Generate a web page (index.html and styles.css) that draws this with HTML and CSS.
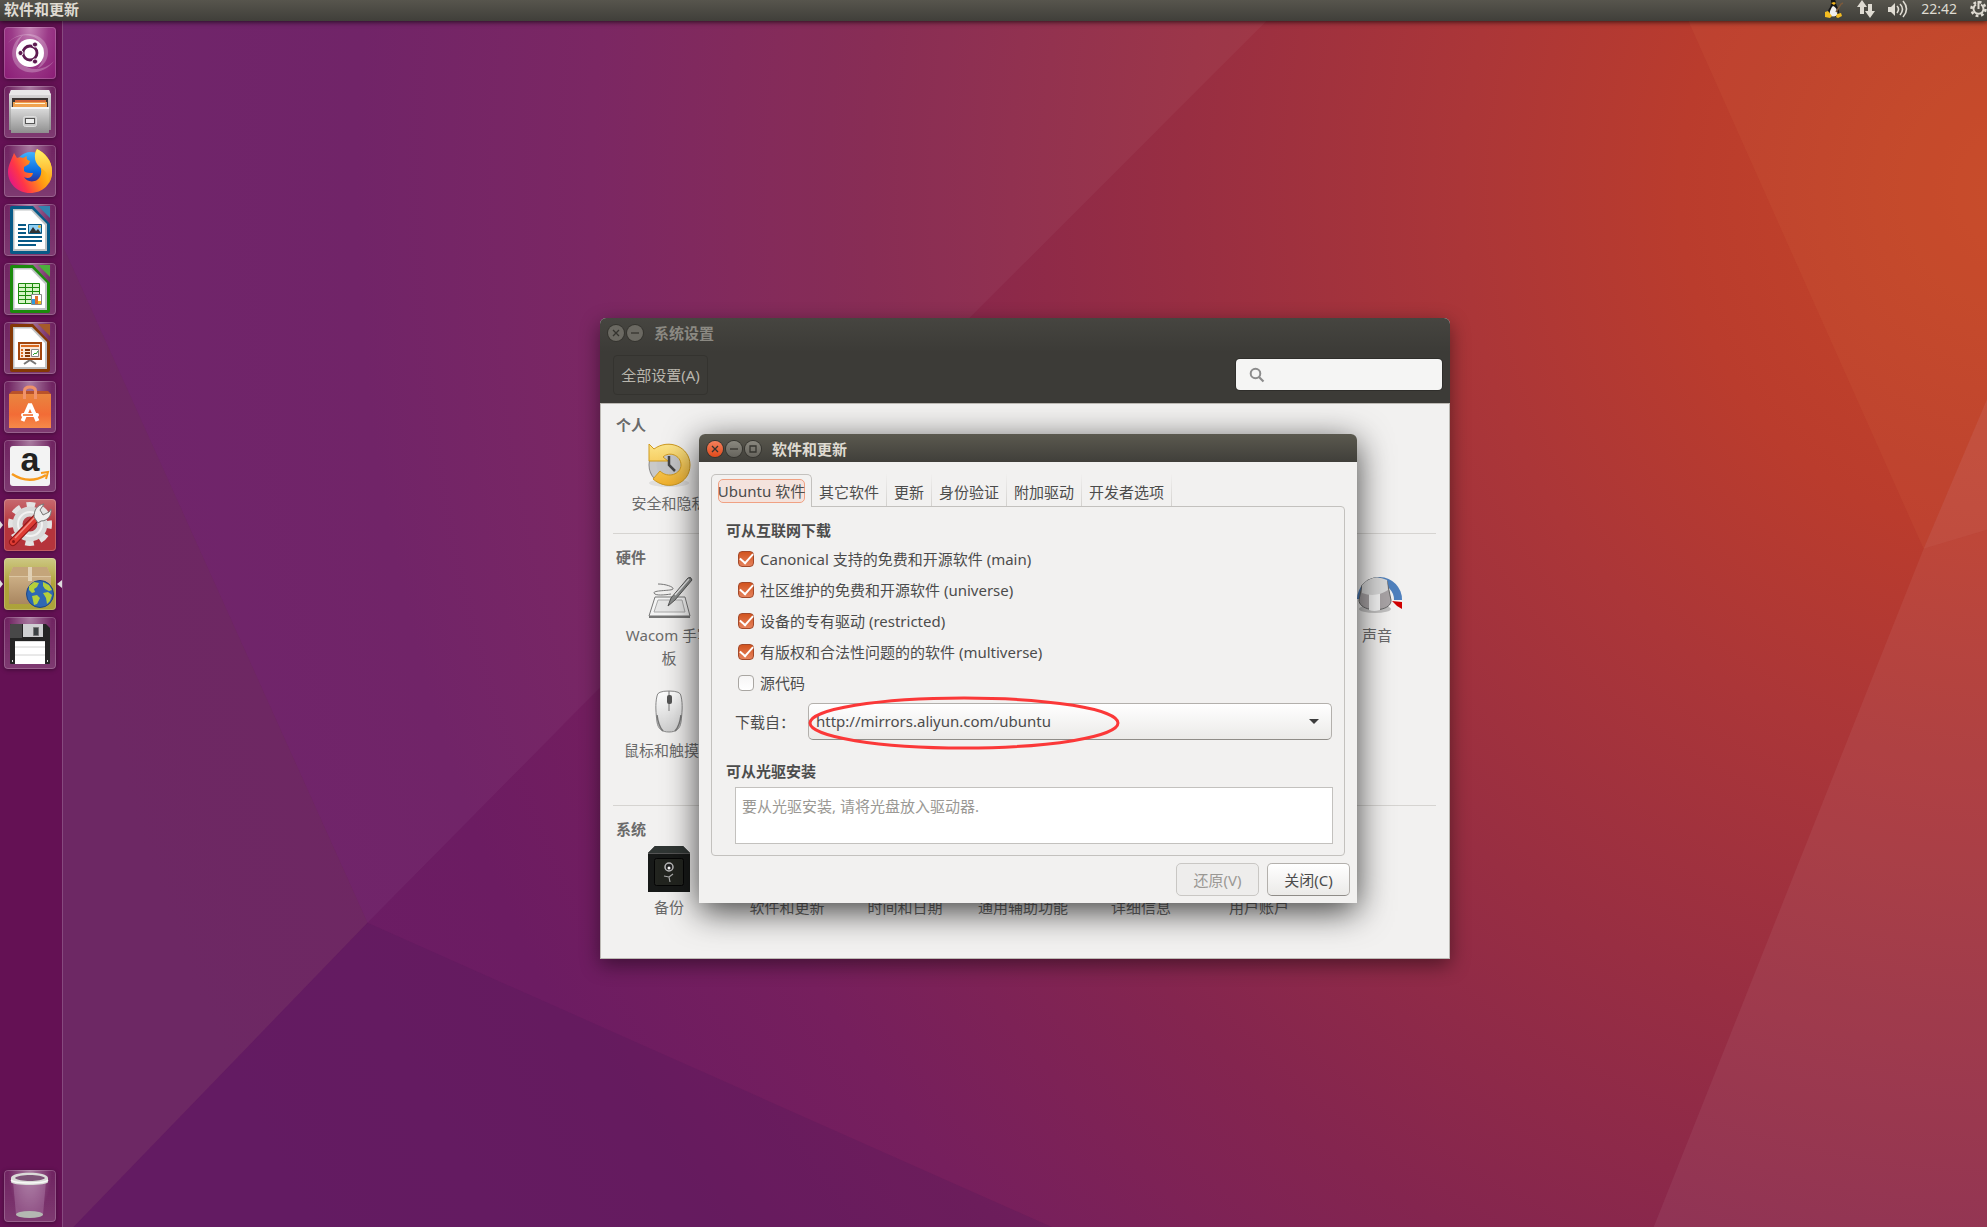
FILE: index.html
```html
<!DOCTYPE html>
<html lang="zh-CN">
<head>
    <meta charset="UTF-8">
    <meta name="viewport" content="width=device-width, initial-scale=1.0">
    <title>软件和更新</title>
    <link rel="stylesheet" href="styles.css">
</head>
<body>
    <svg class="wallpaper" viewBox="0 0 1568 968" preserveAspectRatio="none" aria-hidden="true">
        <defs>
            <radialGradient id="wall" gradientUnits="userSpaceOnUse" cx="0" cy="0" r="1" gradientTransform="translate(1590 150) scale(1560 1620)">
                <stop offset="0" stop-color="#c64826"/>
                <stop offset="0.17" stop-color="#ba3c2d"/>
                <stop offset="0.28" stop-color="#ab3638"/>
                <stop offset="0.42" stop-color="#982e42"/>
                <stop offset="0.58" stop-color="#84254f"/>
                <stop offset="0.72" stop-color="#761f5d"/>
                <stop offset="0.84" stop-color="#6c1c62"/>
                <stop offset="1" stop-color="#6a1d66"/>
            </radialGradient>
        </defs>
        <rect width="1568" height="968" fill="url(#wall)"/>
        <path d="M0 0H1016L460 556L290 728L50 195L0 80z" fill="#fff" fill-opacity="0.04"/>
        <path d="M50 195L290 728L58 968H0V80z" fill="#806060" fill-opacity="0.18"/>
        <path d="M290 728L58 968H830z" fill="#501858" fill-opacity="0.25"/>
        <path d="M1325 0L1518 433L1568 315V0z" fill="#e08050" fill-opacity="0.1"/>
        <path d="M1518 433L1568 315V418z" fill="#fff" fill-opacity="0.09"/>
        <path d="M1518 433L1568 418V968H1305z" fill="#fff" fill-opacity="0.06"/>
    </svg>

    <header class="topbar">
        <span class="app-name">软件和更新</span>
        <div class="indicators">
            <svg width="20" height="20" viewBox="0 0 20 20">
                <path d="M7 1C9-1 12 0 12 4c0 3 3 5 3 9 0 3-2 5-6 5s-6-2-5-6c1-3 3-4 3-8z" fill="#161616"/>
                <path d="M9 7c3 1 5 5 4 9-2 2-6 2-7 0-1-3 1-7 3-9z" fill="#eee"/>
                <path d="M7 4l3-1 2 1-2 2z" fill="#f2b51d"/>
                <path d="M1 13l3-1 4 5-2 2-5-1zM13 15l4-1 1 3-4 2-2-1z" fill="#f5bd20"/>
                <path d="M12 13L17 5l2-1" stroke="#7b5a3c" stroke-width="1.5" fill="none"/>
            </svg>
            <svg width="18" height="20" viewBox="0 0 18 20">
                <path d="M0 8L5 1l5 7H7v7H3V8zM8 12h3V5h4v7h3l-5 7z" fill="#dfdbd2"/>
            </svg>
            <svg width="20" height="20" viewBox="0 0 20 20">
                <path d="M0 8h3l4-4v13l-4-4H0z" fill="#dfdbd2"/>
                <path d="M9 7q3 3 0 7M12 5q5 5 0 11M15 2q7 8 0 16" stroke="#dfdbd2" stroke-width="1.6" fill="none"/>
            </svg>
            <time>22:42</time>
            <svg width="17" height="20" viewBox="0 0 17 20">
                <circle cx="8.500" cy="10" r="7" fill="none" stroke="#dfdbd2" stroke-width="2.500" stroke-dasharray="2.800 2.700"/>
                <path d="M6 5.500a5 5 0 1 0 5 0" fill="none" stroke="#dfdbd2" stroke-width="2"/>
                <path d="M8.500 2v8" stroke="#dfdbd2" stroke-width="2"/>
            </svg>
        </div>
    </header>

    <div class="workspace">
        <nav class="launcher" aria-label="启动器">
            <button class="tile tile-dash" aria-label="搜索">
                <svg viewBox="0 0 52 52">
                    <path d="M2 18C12 4 32 4 40 14c7 9 5 22-7 28 8-8 9-22 0-30C24 5 10 8 2 18z" fill="#fff" fill-opacity="0.25"/>
                    <path d="M50 34C40 48 20 49 12 38 5 29 8 14 19 8 11 17 10 29 18 37c9 8 23 6 32-3z" fill="#fff" fill-opacity="0.25"/>
                    <circle cx="26" cy="26" r="14" fill="#fff"/>
                    <circle cx="26" cy="26" r="7" fill="none" stroke="#5d1a50" stroke-width="2.800"/>
                    <g fill="#5d1a50" stroke="#fff" stroke-width="1">
                        <circle cx="16.500" cy="26" r="2.600"/>
                        <circle cx="31" cy="17.500" r="2.600"/>
                        <circle cx="31" cy="34.500" r="2.600"/>
                    </g>
                </svg>
            </button>
            <button class="tile" aria-label="文件">
                <svg viewBox="0 0 52 52">
                    <defs>
                        <linearGradient id="steel" x2="0" y2="1"><stop stop-color="#dedede"/><stop offset="1" stop-color="#8f8f8f"/></linearGradient>
                    </defs>
                    <path d="M7 4h38l2 5v35H5V9z" fill="url(#steel)"/>
                    <path d="M7 4h38l2 5H5z" fill="#e8e8e8"/>
                    <path d="M8 12h36v12H8z" fill="#3b3634"/>
                    <path d="M11 14h31v4H11z" fill="#d4683a"/>
                    <path d="M9 16h34v6H9z" fill="#f0a24e"/>
                    <path d="M11 17h30v1H11z" fill="#fff3d8"/>
                    <path d="M7 21h38v26H7z" fill="url(#steel)"/>
                    <path d="M7 21h38v2H7z" fill="#f5f5f5"/>
                    <rect x="19.500" y="30.500" width="13" height="10" rx="2" fill="#c9c9c9" stroke="#dedede"/>
                    <rect x="21.500" y="32.500" width="9" height="5" fill="#eee" stroke="#555"/>
                </svg>
            </button>
            <button class="tile" aria-label="Firefox">
                <svg viewBox="0 0 52 52">
                    <defs>
                        <linearGradient id="fox" x1="0" y1="0.700" x2="1" y2="0.200"><stop stop-color="#e31587"/><stop offset="0.250" stop-color="#ff3647"/><stop offset="0.600" stop-color="#ff9a12"/><stop offset="1" stop-color="#ffe226"/></linearGradient>
                        <linearGradient id="globe" x2="0" y2="1"><stop stop-color="#3fb4ff"/><stop offset="0.600" stop-color="#0a6be0"/><stop offset="1" stop-color="#3a1f87"/></linearGradient>
                        <linearGradient id="tail" x2="0" y2="1"><stop stop-color="#fff36a"/><stop offset="1" stop-color="#ff9e13"/></linearGradient>
                    </defs>
                    <circle cx="27" cy="23" r="16" fill="url(#globe)"/>
                    <path d="M10 8l3 5c2-1 4-1 6 0l4-2c-1 3 0 4 3 5l-1 3-5 3 0 4c2 2 5 2 9 2-1 5-5 6-9 4 2 4 8 6 13 3 6-4 5-13 1-17-4-4-4-10-1-14 8 4 15 11 15 22 0 13-9 22-22 22S4 38 4 27c0-7 4-13 6-19z" fill="url(#fox)"/>
                    <path d="M33 4c8 4 15 12 15 23 0 4-1 8-3 11 1-7-3-12-8-15-6-4-8-12-4-19z" fill="url(#tail)"/>
                </svg>
            </button>
            <button class="tile" aria-label="LibreOffice Writer">
                <svg viewBox="0 0 52 52">
                    <path d="M8 2h21l17 18v28q0 2-2 2H8q-2 0-2-2V4q0-2 2-2z" fill="#075986"/>
                    <path d="M34 2h12v12z" fill="#3382ae"/>
                    <path d="M9 5h19l15 15v27H9z" fill="#bfc3c5"/><path d="M10.500 6.500H27L41 21v24H10.500z" fill="#fff"/>
                    <path d="M14 21h8M14 25h8M14 29h8M14 33h24M14 37h24M14 41h18" stroke="#075986" stroke-width="2"/>
                    <path d="M24.500 20.500h13v9h-13z" fill="#8fd0f5" stroke="#075986"/>
                    <path d="M25 29l4-6 3 4 2-2 3 4z" fill="#333"/><circle cx="35.500" cy="22.500" r="1.500" fill="#e4b53a"/>
                </svg>
            </button>
            <button class="tile" aria-label="LibreOffice Calc">
                <svg viewBox="0 0 52 52">
                    <path d="M8 2h21l17 18v28q0 2-2 2H8q-2 0-2-2V4q0-2 2-2z" fill="#1b8a0c"/>
                    <path d="M34 2h12v12z" fill="#4cae3c"/>
                    <path d="M9 5h19l15 15v27H9z" fill="#bfc3c5"/><path d="M10.500 6.500H27L41 21v24H10.500z" fill="#fff"/>
                    <path d="M14.500 20.500h21v20h-21z" fill="#d6f5c6"/>
                    <path d="M14.500 20.500h21v20h-21zM14 24.500h22M14 28.500h22M14 32.500h22M14 36.500h22M21.500 20v21M28.500 20v21" fill="none" stroke="#1b8a0c"/>
                    <path d="M27.500 31.500h10v10h-10z" fill="#fff" stroke="#888"/>
                    <path d="M28 36h3v5h-3z" fill="#2f9be0"/><path d="M31 33h3v8h-3z" fill="#e0702a"/><path d="M34 38h3v3h-3z" fill="#f0c020"/>
                </svg>
            </button>
            <button class="tile" aria-label="LibreOffice Impress">
                <svg viewBox="0 0 52 52">
                    <path d="M8 2h21l17 18v28q0 2-2 2H8q-2 0-2-2V4q0-2 2-2z" fill="#843806"/>
                    <path d="M34 2h12v12z" fill="#a55a2a"/>
                    <path d="M9 5h19l15 15v27H9z" fill="#bfc3c5"/><path d="M10.500 6.500H27L41 21v24H10.500z" fill="#fff"/>
                    <path d="M20 42l6-4 6 4" fill="none" stroke="#777" stroke-width="2"/>
                    <path d="M15 21h22v16H15z" fill="#fbe6d6" stroke="#a2460e" stroke-width="2"/>
                    <path d="M17 24h18" stroke="#d9691e" stroke-width="2"/>
                    <path d="M17 28h2M17 31h2M17 34h2" stroke="#d9691e" stroke-width="2"/>
                    <path d="M21 28h5M21 31h5M21 34h5" stroke="#843806" stroke-width="2"/>
                    <path d="M27.500 27.500h7v7h-7z" fill="#fff" stroke="#888"/><path d="M29 33l2-2 1 1 2-3" fill="none" stroke="#2ca02c"/>
                </svg>
            </button>
            <button class="tile" aria-label="Ubuntu 软件">
                <svg viewBox="0 0 52 52">
                    <defs><linearGradient id="bag" x2="0" y2="1"><stop stop-color="#e9853f"/><stop offset="0.600" stop-color="#f26c36"/><stop offset="1" stop-color="#f58a4a"/></linearGradient></defs>
                    <path d="M5 13l3-3h36l3 3z" fill="#b9522a"/>
                    <path d="M5 13h42v34H5z" fill="url(#bag)"/>
                    <path d="M20.500 18V10q0-4 5.500-4t5.500 4v8" fill="none" stroke="#f0936b" stroke-width="3"/>
                    <path d="M18.500 40l7.500-17 7.500 17" fill="none" stroke="#fff" stroke-width="4" stroke-linejoin="bevel"/>
                    <rect x="17" y="32" width="18" height="4" rx="2" fill="#fff"/><path d="M19 34h10" stroke="#f0641e" stroke-width="1.500"/>
                </svg>
            </button>
            <button class="tile" aria-label="Amazon">
                <svg viewBox="0 0 52 52">
                    <rect x="6" y="6" width="40" height="40" rx="3" fill="#f3f3f3"/>
                    <text class="amazon-a" x="26" y="31" text-anchor="middle">a</text>
                    <path d="M8 34q17 11 34 1" fill="none" stroke="#f79a1c" stroke-width="2.500"/>
                    <path d="M37 33l7-1-2 7" fill="none" stroke="#f79a1c" stroke-width="2"/>
                </svg>
            </button>
            <button class="tile tile-red is-running" aria-label="系统设置">
                <svg viewBox="0 0 52 52">
                    <circle cx="26" cy="25" r="19" fill="none" stroke="#e3e3e3" stroke-width="6" stroke-dasharray="8.500 6.420" stroke-dashoffset="4"/>
                    <circle cx="26" cy="25" r="12.500" fill="none" stroke="#d9d9d9" stroke-width="10"/>
                    <circle cx="26" cy="25" r="12" fill="none" stroke="#f2f2f2" stroke-width="2"/>
                    <path d="M9 43L33 18" stroke="#8f1515" stroke-width="8" stroke-linecap="round"/>
                    <path d="M9 43L33 18" stroke="#dd3b33" stroke-width="6" stroke-linecap="round"/>
                    <path d="M11 39L31 18" stroke="#f48b80" stroke-width="1.500"/>
                    <path d="M30 18c0-7 3-12 10-13l-4 6 3 5 6-3 2-3c1 7-4 12-10 12l-3 2z" fill="#eee" stroke="#777"/>
                    <circle cx="9.500" cy="42.500" r="1.500" fill="#8f1515"/>
                </svg>
            </button>
            <button class="tile tile-olive is-running is-active" aria-label="软件和更新">
                <svg viewBox="0 0 52 52">
                    <defs><linearGradient id="box" x2="0" y2="1"><stop stop-color="#d8bd92"/><stop offset="1" stop-color="#a98660"/></linearGradient></defs>
                    <path d="M5 18l4-9h34l4 9v28H5z" fill="url(#box)"/>
                    <path d="M5 18l4-9h34l4 9z" fill="#c4a57a"/>
                    <path d="M5 18.500h42" stroke="#dcc6a2"/>
                    <path d="M24 9h4v14h-4z" fill="#e0d0b4"/>
                    <circle cx="36" cy="36" r="13.500" fill="#2f68b4" stroke="#1f4784"/>
                    <path d="M25 28l5-4 5 1-2 4-3 2 1 3-3 1-3-3zM28 38l5-1 3 3-3 6-3 1zM39 24l6 3 3 5-3 1-4-2-2-3zM39 35l5-1 4 3-2 6-3 3-1-6z" fill="#b5cf3a"/>
                </svg>
            </button>
            <button class="tile" aria-label="磁盘">
                <svg viewBox="0 0 52 52">
                    <path d="M6 8q0-1 1-1h35l4 4v35q0 1-1 1H7q-1 0-1-1z" fill="#242424"/>
                    <path d="M6 8q0-1 1-1h11v14H6z" fill="#484848"/>
                    <path d="M19 7h20v13H19z" fill="#cfd0d2"/><path d="M29.500 10.500h5v8h-5z" fill="#3c4244" stroke="#777"/>
                    <path d="M11 24h30v23H11z" fill="#fff"/><path d="M11 30h30M11 38h30" stroke="#d2d2d2"/>
                    <path d="M11 24h30v1H11z" fill="#ddd"/>
                    <path d="M8 43h1v2H8zM43 43h1v2h-1z" fill="#ddd"/>
                </svg>
            </button>
            <button class="tile tile-trash" aria-label="回收站">
                <svg viewBox="0 0 52 52">
                    <path d="M9 11l3 34q14 5 27 0l3-34z" fill="#d9b6d6" fill-opacity="0.25"/>
                    <ellipse cx="25.500" cy="44.500" rx="13.500" ry="3.500" fill="#b4b8b2"/>
                    <ellipse cx="26" cy="8" rx="17" ry="4" fill="#7d5377"/>
                    <path d="M7 8c0-7 37-7 37 0v4c0 4-37 4-37 0z M11 8c3 4 27 4 30 0-3-4-27-4-30 0z" fill="#dadbd8" fill-rule="evenodd"/>
                    <path d="M7 10c4 4 33 4 37 0" fill="none" stroke="#f8f8f8" stroke-width="1.500"/>
                </svg>
            </button>
        </nav>

        <main class="desktop">
            <section class="window settings-window">
                <header class="settings-header">
                    <div class="titlebar">
                        <button class="wbtn" aria-label="关闭"><svg viewBox="0 0 16 16"><path d="M5 5l6 6M11 5l-6 6"/></svg></button>
                        <button class="wbtn" aria-label="最小化"><svg viewBox="0 0 16 16"><path d="M4 8h8"/></svg></button>
                        <h1>系统设置</h1>
                    </div>
                    <div class="toolbar">
                        <button class="all-settings">全部设置(A)</button>
                        <label class="search">
                            <svg width="16" height="16" viewBox="0 0 16 16"><circle cx="6.500" cy="6.500" r="4.800" fill="none" stroke="#8c8c8c" stroke-width="2"/><path d="M10 10l4.500 4.500" stroke="#8c8c8c" stroke-width="2.200"/></svg>
                            <input type="text" aria-label="搜索">
                        </label>
                    </div>
                </header>
                <div class="settings-body">
                    <section class="group">
                        <h2>个人</h2>
                        <div class="items">
                            <a href="#" class="item">
                                <svg viewBox="0 0 48 48">
                                    <defs><linearGradient id="gold" x2="0" y2="1"><stop stop-color="#fbe48a"/><stop offset="1" stop-color="#f0b02c"/></linearGradient></defs>
                                    <ellipse cx="24" cy="42" rx="20" ry="4" fill="#000" fill-opacity="0.08"/>
                                    <circle cx="24" cy="24" r="16" fill="#b9babc" stroke="#8b8b8b" stroke-width="9"/>
                                    <circle cx="24" cy="24" r="16" fill="#c4c5c7" stroke="#c9c9c9" stroke-width="7"/>
                                    <path d="M4 3l5 5C24-3 45 6 45 24c0 19-22 27-37 14l7-8c8 8 21 3 21-6 0-10-12-14-18-8l5 4H4z" fill="url(#gold)" stroke="#cf9a1f"/>
                                    <path d="M24 15v9l6 6" fill="none" stroke="#444" stroke-width="2.500"/>
                                </svg>
                                <span>安全和隐私</span>
                            </a>
                        </div>
                    </section>
                    <section class="group">
                        <h2>硬件</h2>
                        <div class="items">
                            <a href="#" class="item">
                                <svg viewBox="0 0 48 48">
                                    <path d="M10 24h30l5 19H4z" fill="#f4f4f4" stroke="#777"/><path d="M4 43h41v2H4z" fill="#777"/>
                                    <path d="M13 27h24l3 12H9z" fill="#e7e7e7" stroke="#aaa"/>
                                    <path d="M13 11c8 0 16 3 15 5s-20 1-19 4 11 2 17 1" fill="none" stroke="#777"/>
                                    <path d="M23 33l3-8L43 5q3-2 4 2L30 27z" fill="#8a8d8c" stroke="#555"/><path d="M30 22L44 6" stroke="#e9e9e9" stroke-width="1.500"/>
                                </svg>
                                <span>Wacom 手写板</span>
                            </a>
                            <a href="#" class="item item-last">
                                <svg viewBox="0 0 48 48">
                                    <path d="M4 26A22 22 0 0 1 49 27H41A15 15 0 0 0 10 26z" fill="#4f80bd"/>
                                    <path d="M39 28l10 1v7l-5-3z" fill="#d00000"/>
                                    <ellipse cx="22" cy="36" rx="16" ry="4" fill="#000" fill-opacity="0.2"/>
                                    <path d="M9 12Q20 0 34 8l4 19c1 13-32 13-32 0z" fill="#a9a4a6" stroke="#666"/>
                                    <path d="M16 20q5-2 11 0v17q-6 2-11 0z" fill="#f3f3f3"/>
                                    <path d="M9 12Q20 0 34 7l1 10q-12 8-26 3z" fill="#d8d8d8"/>
                                </svg>
                                <span>声音</span>
                            </a>
                        </div>
                        <div class="items items-tall">
                            <a href="#" class="item">
                                <svg viewBox="0 0 48 48">
                                    <defs><linearGradient id="mouse" x2="0" y2="1"><stop stop-color="#fff"/><stop offset="1" stop-color="#cfcfcf"/></linearGradient></defs>
                                    <path d="M12 8q0-5 12-5t12 5c2 8 1 18 0 26-1 7-5 10-12 10s-11-3-12-10c-1-8-2-18 0-26z" fill="url(#mouse)" stroke="#888"/>
                                    <path d="M12 27c1 8 3 13 6 16M36 27c-1 8-3 13-6 16" fill="none" stroke="#777" stroke-width="1.500"/>
                                    <path d="M24 3v20" stroke="#777"/><rect x="22" y="7" width="5" height="9" rx="2" fill="#555"/>
                                </svg>
                                <span>鼠标和触摸板</span>
                            </a>
                        </div>
                    </section>
                    <section class="group">
                        <h2>系统</h2>
                        <div class="items">
                            <a href="#" class="item">
                                <svg viewBox="0 0 48 48">
                                    <path d="M3 8l7-7h28l7 7v39H3z" fill="#171918"/><path d="M3 8l7-7h28l7 7z" fill="#303634"/><path d="M3 8.500h42" stroke="#555"/>
                                    <rect x="9.500" y="13.500" width="29" height="27" rx="2" fill="#22241f" stroke="#050505"/>
                                    <circle cx="24" cy="22" r="4" fill="#222" stroke="#bbb" stroke-width="1.500"/><circle cx="24" cy="23" r="1.500" fill="#fff"/>
                                    <path d="M24 32l-5-1M24 32l4-3M24 32l1 5" stroke="#aaa" stroke-width="1.200"/>
                                </svg>
                                <span>备份</span>
                            </a>
                            <a href="#" class="item"><svg viewBox="0 0 48 48"><rect x="6" y="6" width="36" height="36" fill="#c2a273"/></svg><span>软件和更新</span></a>
                            <a href="#" class="item"><svg viewBox="0 0 48 48"><circle cx="24" cy="24" r="18" fill="#eee" stroke="#777"/></svg><span>时间和日期</span></a>
                            <a href="#" class="item"><svg viewBox="0 0 48 48"><circle cx="24" cy="24" r="18" fill="#3b73b8"/></svg><span>通用辅助功能</span></a>
                            <a href="#" class="item"><svg viewBox="0 0 48 48"><rect x="6" y="6" width="36" height="36" fill="#aaa"/></svg><span>详细信息</span></a>
                            <a href="#" class="item"><svg viewBox="0 0 48 48"><circle cx="24" cy="24" r="18" fill="#999"/></svg><span>用户账户</span></a>
                        </div>
                    </section>
                </div>
            </section>

            <section class="window dialog">
                <header class="titlebar">
                    <button class="wbtn wbtn-close" aria-label="关闭"><svg viewBox="0 0 16 16"><path d="M5 5l6 6M11 5l-6 6"/></svg></button>
                    <button class="wbtn" aria-label="最小化"><svg viewBox="0 0 16 16"><path d="M4 8h8"/></svg></button>
                    <button class="wbtn" aria-label="最大化"><svg viewBox="0 0 16 16"><path d="M5 5h6v6H5z"/></svg></button>
                    <h1>软件和更新</h1>
                </header>
                <div class="dialog-body">
                    <div class="tabs" role="tablist">
                        <button class="tab active" role="tab" aria-selected="true"><span>Ubuntu 软件</span></button>
                        <button class="tab" role="tab">其它软件</button>
                        <button class="tab" role="tab">更新</button>
                        <button class="tab" role="tab">身份验证</button>
                        <button class="tab" role="tab">附加驱动</button>
                        <button class="tab" role="tab">开发者选项</button>
                    </div>
                    <div class="panel" role="tabpanel">
                        <h2>可从互联网下载</h2>
                        <label class="check"><input type="checkbox" checked><span>Canonical 支持的免费和开源软件 (main)</span></label>
                        <label class="check"><input type="checkbox" checked><span>社区维护的免费和开源软件 (universe)</span></label>
                        <label class="check"><input type="checkbox" checked><span>设备的专有驱动 (restricted)</span></label>
                        <label class="check"><input type="checkbox" checked><span>有版权和合法性问题的的软件 (multiverse)</span></label>
                        <label class="check"><input type="checkbox"><span>源代码</span></label>
                        <div class="server">
                            <label for="server">下载自：</label>
                            <div class="combo">
                                <select id="server">
                                    <option>http://mirrors.aliyun.com/ubuntu</option>
                                </select>
                                <svg class="marker" viewBox="0 0 312 54" aria-hidden="true"><ellipse cx="156" cy="27" rx="154" ry="25"/></svg>
                            </div>
                        </div>
                        <h2>可从光驱安装</h2>
                        <div class="cdrom-list">要从光驱安装, 请将光盘放入驱动器.</div>
                    </div>
                    <footer class="actions">
                        <button class="btn" disabled>还原(V)</button>
                        <button class="btn">关闭(C)</button>
                    </footer>
                </div>
            </section>
        </main>
    </div>
</body>
</html>
```
FILE: styles.css
```css
* {
    box-sizing: border-box;
}

body {
    margin: 0;
    height: 100vh;
    display: flex;
    flex-direction: column;
    overflow: hidden;
    background: #6c2064;
    color: #4c4c4c;
    font: 15px/22px "Noto Sans", "Noto Sans CJK SC", sans-serif;
}

button, input, select {
    font: inherit;
    color: inherit;
    margin: 0;
    padding: 0;
    border: 0;
    background: none;
}

h1, h2 {
    margin: 0;
    font-size: 15px;
    font-weight: bold;
}

a {
    color: inherit;
    text-decoration: none;
}

.wallpaper {
    position: absolute;
    inset: 0;
    width: 100%;
    height: 100%;
    z-index: -1;
}

/* top panel */
.topbar {
    height: 21px;
    padding: 0 0 3px 4px;
    display: flex;
    align-items: center;
    justify-content: space-between;
    background: linear-gradient(#57554d, #403f3a);
    color: #dfdbd2;
    box-shadow: 0 1px 5px rgba(0, 0, 0, 0.7);
    line-height: 18px;
    z-index: 2;
}

.app-name {
    font-weight: bold;
}

.indicators {
    display: flex;
    align-items: center;
    gap: 13px;
}

.indicators time {
    font-size: 14px;
}

.workspace {
    flex: 1;
    display: flex;
    min-height: 0;
}

/* launcher */
.launcher {
    width: 63px;
    padding: 6px 0 5px 4px;
    display: flex;
    flex-direction: column;
    gap: 7px;
    background: #641154;
    border-right: 1px solid #874a7f;
}

.tile {
    position: relative;
    width: 52px;
    height: 52px;
    border-radius: 4px;
    background: radial-gradient(ellipse at 50% 0, rgba(255, 255, 255, 0.45), rgba(255, 255, 255, 0.08) 60%), linear-gradient(rgba(255, 255, 255, 0), rgba(255, 255, 255, 0.1));
    box-shadow: inset 0 0 0 1px rgba(255, 255, 255, 0.2), 0 1px 4px rgba(0, 0, 0, 0.35);
}

.tile svg {
    display: block;
    width: 52px;
    height: 52px;
    overflow: visible;
}

.tile-dash {
    background: radial-gradient(ellipse at 50% 0, #c583b6, #9b3a88 50%, #8a1a74);
}

.tile-red {
    background: linear-gradient(#c76a6f, #b5343c 50%, #b5343c);
}

.tile-olive {
    background: linear-gradient(#cdc884, #b0a23a 50%, #aca33a);
}

.tile-trash {
    margin-top: auto;
}

.is-running::before,
.is-active::after {
    content: "";
    position: absolute;
    top: 22px;
    border: 4px solid transparent;
}

.is-running::before {
    left: -4px;
    border-left: 3px solid #ddd;
    border-right: 0;
}

.is-active::after {
    right: -6px;
    border-right: 5px solid #ddd;
    border-left: 0;
}

.amazon-a {
    font: bold 34px "Liberation Sans", sans-serif;
    fill: #222;
}

/* windows */
.desktop {
    flex: 1;
    position: relative;
}

.window {
    position: absolute;
    border-radius: 6px 6px 0 0;
    background: #f2f1f0;
}

.titlebar {
    height: 28px;
    padding: 1px 0 0 8px;
    display: flex;
    align-items: center;
    gap: 3px;
}

.titlebar h1 {
    margin-left: 8px;
}

.wbtn {
    width: 16px;
    height: 16px;
    border-radius: 50%;
    background: linear-gradient(#8a887f, #66645d);
    box-shadow: 0 0 0 1px #35342f;
}

.wbtn svg {
    display: block;
    fill: none;
    stroke: #35342f;
    stroke-width: 1.3;
}

.wbtn-close {
    background: linear-gradient(#f5805c, #df4a1b);
}

.settings-window {
    left: 537px;
    top: 297px;
    width: 850px;
    min-height: 641px;
    display: flex;
    flex-direction: column;
    box-shadow: 0 6px 20px rgba(0, 0, 0, 0.45);
    color: #6a6a6a;
}

.settings-header {
    height: 85px;
    border-radius: 6px 6px 0 0;
    background: linear-gradient(#464540, #3c3b37 40%);
    color: #8b8982;
}

.settings-header .wbtn {
    background: #6b6962;
}

.toolbar {
    height: 57px;
    padding: 0 8px 0 13px;
    display: flex;
    align-items: center;
    justify-content: space-between;
}

.all-settings {
    width: 95px;
    height: 40px;
    border: 1px solid #34332f;
    border-radius: 4px;
    color: #b9b6ad;
    white-space: nowrap;
}

.search {
    width: 206px;
    height: 31px;
    padding: 0 13px;
    display: flex;
    align-items: center;
    gap: 8px;
    border-radius: 4px;
    background: #f5f5f4;
    box-shadow: 0 0 0 1px #2f2e2b;
}

.search input {
    flex: 1;
    min-width: 0;
    outline: 0;
}

.settings-body {
    flex: 1;
    padding: 10px 13px 0 9px;
    border: 1px solid #bcb9b4;
}

.group + .group {
    padding-top: 13px;
    background: linear-gradient(#d6d4d1, #d6d4d1) 3px 0 / 100% 1px no-repeat;
}

.group h2 {
    margin: 0 0 5px 6px;
}

.items {
    display: grid;
    grid-template-columns: repeat(7, 1fr);
    padding-bottom: 18px;
}

.items-tall {
    min-height: 117px;
}

.item {
    display: flex;
    flex-direction: column;
    align-items: center;
    gap: 3px;
    line-height: 23px;
    text-align: center;
}

.item span {
    max-width: 92px;
}

.item-last {
    grid-column: 7;
}

.item svg {
    width: 48px;
    height: 48px;
    overflow: visible;
}

/* software & updates dialog */
.dialog {
    left: 636px;
    top: 413px;
    width: 658px;
    box-shadow: 0 8px 34px rgba(0, 0, 0, 0.75);
}

.dialog .titlebar {
    border-radius: 6px 6px 0 0;
    background: linear-gradient(#5b594f, #403f3a);
    color: #dfdbd2;
}

.dialog-body {
    padding: 12px 12px 7px;
}

.tabs {
    display: flex;
    align-items: flex-end;
}

.tab {
    height: 32px;
    padding: 4px 7px 0;
    border-right: 1px solid #dcdad8;
    border-image: linear-gradient(#f2f1f0, #d2d0cd) 1;
}

.tab.active {
    position: relative;
    width: 101px;
    height: 33px;
    margin-bottom: -1px;
    padding: 0 6px 1px;
    border: 1px solid #c3c1be;
    border-image: none;
    border-bottom: 0;
    border-radius: 5px 5px 0 0;
    background: #f2f1f0;
    white-space: nowrap;
}

.tab.active span {
    display: flex;
    justify-content: center;
    border: 1px solid #f0a183;
    border-radius: 5px;
    background: #f4e3dd;
}

.panel {
    padding: 12px 11px 11px 14px;
    border: 1px solid #c3c1be;
    border-radius: 0 4px 4px 4px;
}

.panel h2 {
    margin-bottom: 2px;
}

.check {
    height: 31px;
    margin-left: 12px;
    display: flex;
    align-items: center;
    gap: 6px;
}

.check input {
    appearance: none;
    width: 16px;
    height: 16px;
    display: grid;
    place-items: center;
    border: 1px solid #a9a6a2;
    border-radius: 4px;
    background: linear-gradient(#f6f5f5, #fff);
}

.check input:checked {
    border-color: #a3492a;
    background: linear-gradient(#d2541f, #e5825c);
}

.check input:checked::before {
    content: "";
    width: 11px;
    height: 6px;
    margin-bottom: 4px;
    border: solid #fff;
    border-width: 0 0 2px 2px;
    transform: rotate(-48deg);
}

.server {
    margin: 5px 1px 20px 9px;
    display: flex;
    align-items: center;
}

.server label {
    width: 73px;
    white-space: nowrap;
}

.combo {
    position: relative;
    flex: 1;
}

.combo::after {
    content: "";
    position: absolute;
    right: 13px;
    top: 16px;
    border: 5px solid transparent;
    border-top-color: #3c3c3c;
    border-bottom: 0;
}

.combo select {
    appearance: none;
    display: block;
    width: 100%;
    height: 37px;
    padding: 0 7px 2px;
    border: 1px solid #b3b0ac;
    border-bottom-color: #8f8c88;
    border-radius: 5px;
    background: linear-gradient(#fff, #ebeae8);
}

.marker {
    position: absolute;
    left: 0;
    top: -7px;
    width: 312px;
    height: 54px;
    pointer-events: none;
}

.marker ellipse {
    fill: none;
    stroke: #fb3838;
    stroke-width: 3;
}

.cdrom-list {
    height: 57px;
    margin: 5px 0 0 9px;
    padding: 7px 6px;
    border: 1px solid #c3c1be;
    background: #fff;
    color: #9a9894;
}

.actions {
    margin: 7px -5px 0 0;
    display: flex;
    justify-content: flex-end;
    gap: 8px;
}

.btn {
    width: 83px;
    height: 33px;
    border: 1px solid #b3b0ac;
    border-bottom-color: #8f8c88;
    border-radius: 5px;
    background: linear-gradient(#fff, #ebeae8);
}

.btn:disabled {
    border-color: #c9c7c4;
    background: #eeedec;
    color: #9a9894;
}
```
